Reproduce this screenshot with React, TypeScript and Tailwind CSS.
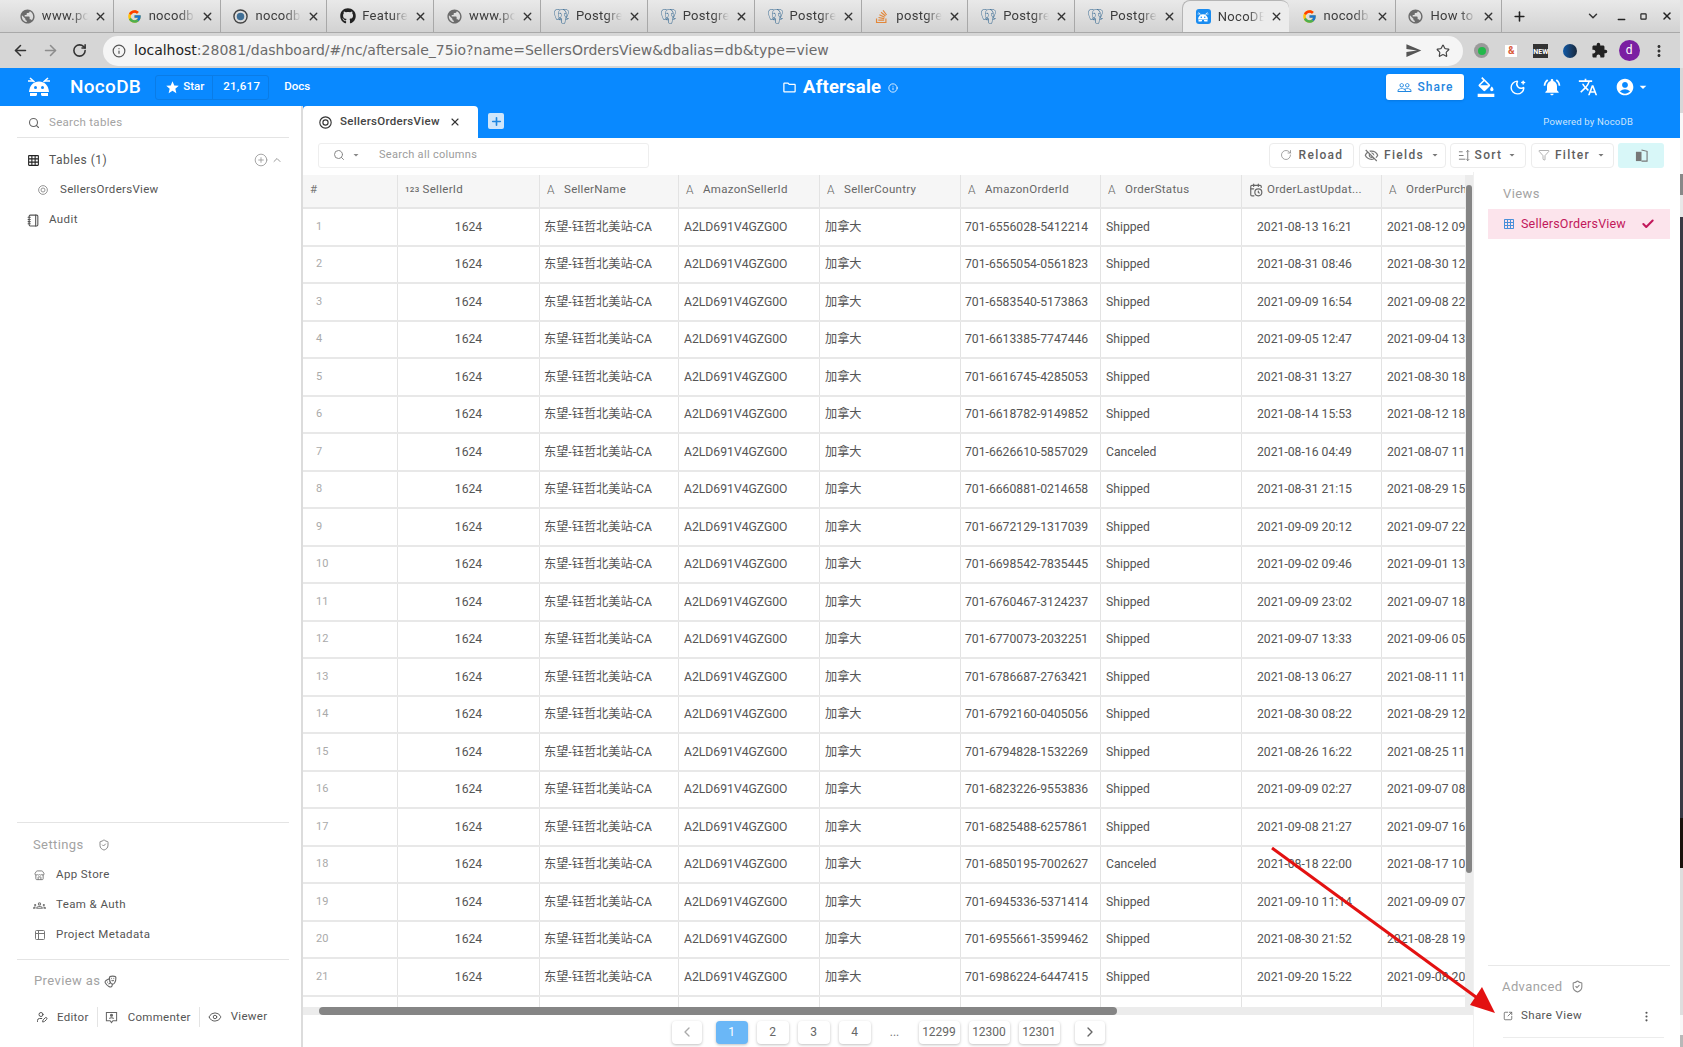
import React from 'react';
import {
  ArrowLeft, ArrowRight, RotateCw, Info, Star, Search, ChevronUp, ChevronLeft, ChevronRight, CirclePlus,
  Notebook, ShieldCheck, Drama, UserPen, Eye, SquareArrowOutUpRight, EllipsisVertical, Plus, X, Minus, ChevronDown,
  CalendarClock, Check, MoonStar, Store, Table2, Filter, Square,
} from 'lucide-react';
import { FcGoogle } from 'react-icons/fc';
import { FaGithub, FaStackOverflow } from 'react-icons/fa';
import { SiPostgresql } from 'react-icons/si';
import {
  MdPublic, MdSend, MdExtension, MdStar, MdOutlineFolder, MdFormatColorFill, MdNotificationsActive, MdTranslate,
  MdAccountCircle, MdArrowDropDown, MdOutlineGroups, MdOutlineGridOn, MdOutlineVisibilityOff, MdMoreVert, MdPeopleOutline,
} from 'react-icons/md';

const NocoLogo = ({ className }: { className?: string }) => (
  <svg viewBox="0 0 24 20" className={className} fill="currentColor">
    <path d="M3 1 L7.5 5 M21 1 L16.5 5" stroke="currentColor" strokeWidth="1.6" fill="none" />
    <path d="M1 4 L6 4 M23 4 L18 4" stroke="currentColor" strokeWidth="1.4" fill="none" />
    <path d="M12 4.5c5.500 0 9.500 4 10 10.500H2c.5-6.500 4.500-10.500 10-10.500z" />
    <circle cx="8.500" cy="10.500" r="1.500" fill="#0989ff" />
    <circle cx="15.500" cy="10.500" r="1.500" fill="#0989ff" />
    <path d="M3 16h7v1.500c0 1-1 1.500-2 1.500H3zM21 16h-7v1.500c0 1 1 1.500 2 1.500h5z" />
  </svg>
);

const TargetIcon = ({ className }: { className?: string }) => (
  <svg viewBox="0 0 16 16" className={className} fill="none" stroke="currentColor">
    <circle cx="8" cy="8" r="7" strokeWidth="1.400" />
    <circle cx="8" cy="8" r="3.200" strokeWidth="1.400" />
  </svg>
);

const RingIcon = () => (
  <svg viewBox="0 0 16 16" className="w-[15px] h-[15px]">
    <circle cx="8" cy="8" r="7" fill="none" stroke="#444" strokeWidth="1.500" />
    <circle cx="8" cy="8" r="4" fill="#3f6f96" />
  </svg>
);

const PgIcon = () => <SiPostgresql className="w-[15px] h-[15px] text-[#336791]" />;
const GlobeIcon = () => <MdPublic className="w-[17px] h-[17px] text-[#6b6b6b]" />;

const chromeTabs: { icon: React.ReactNode; label: string; active?: boolean }[] = [
  { icon: <GlobeIcon />, label: 'www.postgresql' },
  { icon: <FcGoogle className="w-[15px] h-[15px]" />, label: 'nocodb' },
  { icon: <RingIcon />, label: 'nocodb/nocodb' },
  { icon: <FaGithub className="w-[16px] h-[16px] text-[#222]" />, label: 'Feature' },
  { icon: <GlobeIcon />, label: 'www.postgresql' },
  { icon: <PgIcon />, label: 'Postgres' },
  { icon: <PgIcon />, label: 'Postgres' },
  { icon: <PgIcon />, label: 'Postgres' },
  { icon: <FaStackOverflow className="w-[15px] h-[15px] text-[#e2873a]" />, label: 'postgres' },
  { icon: <PgIcon />, label: 'Postgres' },
  { icon: <PgIcon />, label: 'Postgres' },
  {
    icon: (
      <span className="w-[15px] h-[15px] rounded-[3px] bg-[#1a8cf0] flex items-center justify-center text-white">
        <NocoLogo className="w-[12px] h-[10px]" />
      </span>
    ),
    label: 'NocoDB',
    active: true,
  },
  { icon: <FcGoogle className="w-[15px] h-[15px]" />, label: 'nocodb' },
  { icon: <GlobeIcon />, label: 'How to' },
];

const rows: [string, string, string, string][] = [
  ['701-6556028-5412214', 'Shipped', '2021-08-13 16:21', '2021-08-12 09:30'],
  ['701-6565054-0561823', 'Shipped', '2021-08-31 08:46', '2021-08-30 12:10'],
  ['701-6583540-5173863', 'Shipped', '2021-09-09 16:54', '2021-09-08 22:14'],
  ['701-6613385-7747446', 'Shipped', '2021-09-05 12:47', '2021-09-04 13:02'],
  ['701-6616745-4285053', 'Shipped', '2021-08-31 13:27', '2021-08-30 18:40'],
  ['701-6618782-9149852', 'Shipped', '2021-08-14 15:53', '2021-08-12 18:21'],
  ['701-6626610-5857029', 'Canceled', '2021-08-16 04:49', '2021-08-07 11:05'],
  ['701-6660881-0214658', 'Shipped', '2021-08-31 21:15', '2021-08-29 15:33'],
  ['701-6672129-1317039', 'Shipped', '2021-09-09 20:12', '2021-09-07 22:48'],
  ['701-6698542-7835445', 'Shipped', '2021-09-02 09:46', '2021-09-01 13:16'],
  ['701-6760467-3124237', 'Shipped', '2021-09-09 23:02', '2021-09-07 18:27'],
  ['701-6770073-2032251', 'Shipped', '2021-09-07 13:33', '2021-09-06 05:51'],
  ['701-6786687-2763421', 'Shipped', '2021-08-13 06:27', '2021-08-11 11:09'],
  ['701-6792160-0405056', 'Shipped', '2021-08-30 08:22', '2021-08-29 12:44'],
  ['701-6794828-1532269', 'Shipped', '2021-08-26 16:22', '2021-08-25 11:37'],
  ['701-6823226-9553836', 'Shipped', '2021-09-09 02:27', '2021-09-07 08:18'],
  ['701-6825488-6257861', 'Shipped', '2021-09-08 21:27', '2021-09-07 16:03'],
  ['701-6850195-7002627', 'Canceled', '2021-08-18 22:00', '2021-08-17 10:25'],
  ['701-6945336-5371414', 'Shipped', '2021-09-10 11:14', '2021-09-09 07:12'],
  ['701-6955661-3599462', 'Shipped', '2021-08-30 21:52', '2021-08-28 19:41'],
  ['701-6986224-6447415', 'Shipped', '2021-09-20 15:22', '2021-09-08 20:56'],
];

const gridCols = 'grid grid-cols-[95px_142px_139px_141px_141px_140px_141px_140px_140px]';
const cellLine = 'border-r border-[#e3e3e3] overflow-hidden whitespace-nowrap flex items-center';

const ColHead = ({ label, type = 'A' }: { label: string; type?: 'A' | 'num' | 'date' }) => (
  <div className={`${cellLine} pl-[7px] gap-[8px] pb-[3px]`}>
    {type === 'A' && <span className="text-[12px] font-light text-[#666] w-[9px]">A</span>}
    {type === 'date' && <CalendarClock className="w-[14px] h-[14px] text-[#666] -mr-[4px]" />}
    {type === 'num' && <span className="text-[8px] font-medium text-[#666] -mr-[5px]">123</span>}
    <span>{label}</span>
  </div>
);

const ToolBtn = ({ children, className = '' }: { children: React.ReactNode; className?: string }) => (
  <div className={`h-[25px] flex items-center justify-center rounded-[4px] border border-[#ececec] text-[12px] font-medium tracking-[1.300px] text-[#5f5f5f] ${className}`}>
    {children}
  </div>
);

const PageBtn = ({ children, active, className = '' }: { children: React.ReactNode; active?: boolean; className?: string }) => (
  <div className={`h-[23px] flex items-center justify-center rounded-[4px] text-[12px] shadow-[0_1px_3px_rgba(0,0,0,0.25)] ${active ? 'bg-[#6ab7f7] text-white' : 'bg-white text-[#666]'} ${className}`}>
    {children}
  </div>
);

const SideItem = ({ icon, label }: { icon: React.ReactNode; label: string }) => (
  <div className="h-[30px] flex items-center pl-[33px] gap-[10px] text-[11.500px] tracking-[0.400px] text-[#555]">
    <span className="w-[13px] flex justify-center text-[#777]">{icon}</span>
    {label}
  </div>
);

export default function App() {
  return (
    <div className="relative w-[1683px] h-[1047px] overflow-hidden flex bg-white font-['Roboto','Noto_Sans_CJK_SC',sans-serif]">
      <div className="w-[1680px] flex flex-col shrink-0">
        {/* browser tabs */}
        <div className="h-[33px] flex items-center pl-[7px] bg-gradient-to-b from-[#e9e9e9] to-[#d2d2d2] border-b border-[#a9a9a9] shrink-0">
          {chromeTabs.map((t, i) => (
            <div
              key={i}
              className={`h-[32px] w-[107px] -ml-[0.200px] flex items-center pl-[12px] pr-[6px] gap-[6px] text-[13px] tracking-[0.300px] text-[#3c3c3c] ${t.active ? 'bg-[#ececec] rounded-t-[8px] border border-b-0 border-[#b5b5b5] w-[105px]' : 'border-r border-[#a8a8a8]'} ${i === 10 || i === 11 ? 'border-r-0' : ''}`}
            >
              <span className="w-[17px] flex justify-center shrink-0">{t.icon}</span>
              <span className="flex-1 overflow-hidden whitespace-nowrap [mask-image:linear-gradient(to_right,black_65%,transparent)]">{t.label}</span>
              <X className="w-[13px] h-[13px] text-[#333] shrink-0" strokeWidth={2.500} />
            </div>
          ))}
          <Plus className="w-[15px] h-[15px] ml-[10px] text-[#222]" strokeWidth={2.500} />
          <ChevronDown className="w-[14px] h-[14px] ml-[59px] text-[#333]" strokeWidth={2.500} />
          <Minus className="w-[11px] h-[11px] ml-[16px] mt-[6px] text-[#222]" strokeWidth={3} />
          <Square className="w-[7px] h-[7px] ml-[13px] text-[#222]" strokeWidth={4} />
          <X className="w-[12px] h-[12px] ml-[14px] text-[#222]" strokeWidth={3} />
        </div>

        {/* browser address bar */}
        <div className="h-[35px] flex items-center bg-[#d6d6d6] shrink-0">
          <ArrowLeft className="ml-[12px] w-[17px] h-[17px] text-[#333]" strokeWidth={2.200} />
          <ArrowRight className="ml-[13px] w-[17px] h-[17px] text-[#8d8d8d]" strokeWidth={2.200} />
          <RotateCw className="ml-[13px] w-[15px] h-[15px] text-[#333]" strokeWidth={2.500} />
          <div className="ml-[16px] w-[1360px] h-[30px] rounded-full bg-[#f5f5f5] flex items-center pl-[9px] pr-[13px] font-['DejaVu_Sans',sans-serif] text-[14px] text-[#6b6b6b]">
            <Info className="w-[14px] h-[14px] text-[#555] mr-[8px]" />
            <span className="text-[#222]">localhost</span>:28081/dashboard/#/nc/aftersale_75io?name=SellersOrdersView&dbalias=db&type=view
            <MdSend className="ml-auto w-[17px] h-[17px] text-[#555]" />
            <Star className="ml-[14px] w-[14px] h-[14px] text-[#444]" strokeWidth={2} />
          </div>
          <div className="ml-[4px] flex items-center">
            <span className="w-[29.500px] flex justify-center"><span className="w-[15px] h-[15px] rounded-full bg-[#9a9a9a] flex items-center justify-center"><span className="w-[8px] h-[8px] rounded-full bg-[#22b84a]" /></span></span>
            <span className="w-[29.500px] flex justify-center"><span className="w-[12px] h-[12px] bg-white text-[#d95a3c] text-[10px] leading-[12px] text-center font-bold">&</span></span>
            <span className="w-[29.500px] flex justify-center"><span className="w-[15px] h-[14px] bg-[#333] text-white text-[7px] leading-[16px] text-center font-bold">NEW</span></span>
            <span className="w-[29.500px] flex justify-center"><span className="w-[14px] h-[14px] rounded-full bg-gradient-to-r from-[#0d5aa8] to-[#16283c]" /></span>
            <span className="w-[29.500px] flex justify-center"><MdExtension className="w-[17px] h-[17px] text-[#222]" /></span>
            <span className="w-[29.500px] flex justify-center"><span className="w-[21px] h-[21px] rounded-full bg-[#7b1fa2] text-white text-[12px] leading-[21px] text-center">d</span></span>
            <span className="w-[29.500px] flex justify-center"><MdMoreVert className="w-[18px] h-[18px] text-[#333]" /></span>
          </div>
        </div>

        {/* app header */}
        <div className="relative h-[38px] bg-[#0989ff] flex items-center text-white shrink-0">
          <NocoLogo className="ml-[27px] w-[24px] h-[20px]" />
          <span className="ml-[19px] text-[19px] font-medium tracking-[0.300px]">NocoDB</span>
          <div className="ml-[14px] w-[114px] h-[25px] flex items-center border border-[#0a7ce6] rounded-[3px] text-[11.500px] font-medium">
            <MdStar className="ml-[9px] w-[15px] h-[15px]" />
            <span className="ml-[3px] w-[29px]">Star</span>
            <span className="h-full border-l border-[#0a7ce6] pl-[10px] flex items-center tracking-[0.300px]">21,617</span>
          </div>
          <span className="ml-[15px] text-[11.500px] font-medium">Docs</span>
          <div className="absolute left-[782px] top-0 h-full pt-[1px] flex items-center">
            <MdOutlineFolder className="w-[15px] h-[15px]" />
            <span className="ml-[6px] text-[18.500px] font-bold tracking-[0.200px]">Aftersale</span>
            <Info className="ml-[7px] w-[10px] h-[10px]" />
          </div>
          <div className="ml-auto flex items-center text-white">
            <div className="w-[78px] h-[26px] rounded-[3px] bg-white shadow-sm flex items-center justify-center gap-[6px] text-[12px] font-medium tracking-[1px] text-[#1f86e0]">
              <MdPeopleOutline className="w-[15px] h-[15px]" />
              Share
            </div>
            <MdFormatColorFill className="ml-[12px] w-[20px] h-[20px]" />
            <MoonStar className="ml-[13px] w-[17px] h-[17px]" strokeWidth={2} />
            <MdNotificationsActive className="ml-[16px] w-[20px] h-[20px]" />
            <MdTranslate className="ml-[16px] w-[20px] h-[20px]" />
            <MdAccountCircle className="ml-[17px] w-[20px] h-[20px]" />
            <MdArrowDropDown className="mr-[29px] w-[16px] h-[16px]" />
          </div>
        </div>

        <div className="flex-1 flex min-h-0">
          {/* sidebar */}
          <aside className="w-[303px] shrink-0 border-r-2 border-[#dcdcdc] flex flex-col pb-[15px]">
            <div className="ml-[17px] mr-[12px] h-[32px] pt-[3px] border-b border-[#e4e4e4] flex items-center pl-[11px] gap-[9px] text-[11.500px] tracking-[0.300px] text-[#a3a3a3]">
              <Search className="w-[12px] h-[12px] text-[#666]" strokeWidth={2.200} />
              Search tables
            </div>
            <div className="mt-[7px] h-[30px] flex items-center pl-[27px] pr-[18px] text-[12px] tracking-[0.500px] text-[#555]">
              <MdOutlineGridOn className="w-[13px] h-[13px] text-[#222] mr-[9px]" />
              Tables (1)
              <CirclePlus className="ml-auto w-[14px] h-[14px] text-[#999]" strokeWidth={1.500} />
              <ChevronUp className="ml-[3px] w-[12px] h-[12px] text-[#999]" />
            </div>
            <div className="h-[30px] flex items-center pl-[38px] gap-[12px] text-[11.500px] tracking-[0.300px] text-[#555]">
              <TargetIcon className="w-[10px] h-[10px] text-[#888]" />
              SellersOrdersView
            </div>
            <div className="h-[30px] flex items-center pl-[27px] gap-[9px] text-[11.500px] tracking-[0.400px] text-[#555]">
              <Notebook className="w-[13px] h-[13px] text-[#555]" />
              Audit
            </div>
            <div className="flex-1" />
            <div className="ml-[17px] mr-[12px] border-t border-[#e4e4e4]" />
            <div className="h-[37px] pt-[6px] flex items-center pl-[33px] gap-[14px] text-[13px] tracking-[0.400px] text-[#a3a3a3]">
              Settings
              <ShieldCheck className="w-[12px] h-[12px] text-[#888]" />
            </div>
            <SideItem icon={<Store className="w-[11px] h-[11px]" />} label="App Store" />
            <SideItem icon={<MdOutlineGroups className="w-[13px] h-[13px]" />} label="Team & Auth" />
            <SideItem icon={<Table2 className="w-[12px] h-[12px]" />} label="Project Metadata" />
            <div className="mt-[9px] ml-[17px] mr-[12px] border-t border-[#e4e4e4]" />
            <div className="h-[42px] flex items-center pl-[34px] gap-[4px] text-[13px] tracking-[0.400px] text-[#a3a3a3]">
              Preview as
              <Drama className="w-[13px] h-[13px] text-[#666]" />
            </div>
            <div className="h-[30px] flex items-center pl-[36px] text-[11.500px] tracking-[0.300px] text-[#555]">
              <UserPen className="w-[12px] h-[12px] text-[#555]" />
              <span className="ml-[9px] pr-[8px] border-r border-[#e4e4e4] h-[20px] leading-[20px]">Editor</span>
              <svg viewBox="0 0 14 14" className="ml-[7px] w-[13px] h-[13px] text-[#666]" fill="none" stroke="currentColor" strokeWidth="1.100">
                <path d="M1.500 1.500h11v9h-4L7 12.500l-1.500-2h-4z" />
                <circle cx="7" cy="4.500" r="1.100" fill="currentColor" />
                <path d="M4.800 8.300c.5-1.300 3.900-1.300 4.400 0" />
              </svg>
              <span className="ml-[10px] pr-[8px] border-r border-[#e4e4e4] h-[20px] leading-[20px]">Commenter</span>
              <Eye className="ml-[8px] w-[14px] h-[14px] text-[#555]" strokeWidth={1.600} />
              <span className="ml-[9px]">Viewer</span>
            </div>
          </aside>

          <div className="flex-1 min-w-0 flex flex-col">
            {/* open tabs strip */}
            <div className="h-[32px] bg-[#0989ff] flex items-end shrink-0">
              <div className="w-[175px] h-[32px] rounded-t-[4px] bg-white flex items-center pl-[16px] text-[11.500px] font-medium tracking-[0.300px] text-[#444]">
                <TargetIcon className="w-[13px] h-[13px] text-[#333] mr-[8px]" />
                SellersOrdersView
                <X className="ml-[9px] w-[12px] h-[12px] text-[#333]" strokeWidth={2.200} />
              </div>
              <div className="ml-[10px] mb-[9px] w-[16px] h-[16px] rounded-[2px] bg-[#cfe6fb] flex items-center justify-center">
                <Plus className="w-[13px] h-[13px] text-[#1f86e0]" strokeWidth={3} />
              </div>
              <span className="ml-auto mr-[47px] mb-[9px] text-[9.500px] tracking-[0.200px] text-[#cfe6fb]">Powered by NocoDB</span>
            </div>

            {/* toolbar */}
            <div className="h-[34px] flex items-center pl-[15px] shrink-0">
              <div className="w-[331px] h-[25px] border border-[#eeeeee] rounded-[3px] flex items-center pl-[14px] text-[11px] tracking-[0.300px] text-[#9c9c9c]">
                <Search className="w-[12px] h-[12px] text-[#888]" />
                <MdArrowDropDown className="ml-[5px] w-[12px] h-[12px] text-[#888]" />
                <span className="ml-[17px]">Search all columns</span>
              </div>
              <ToolBtn className="ml-auto w-[85px] gap-[7px]">
                <RotateCw className="w-[12px] h-[12px] text-[#888]" strokeWidth={1.500} />
                Reload
              </ToolBtn>
              <ToolBtn className="ml-[5px] w-[87px] gap-[5px]">
                <MdOutlineVisibilityOff className="w-[15px] h-[15px] text-[#777]" />
                Fields
                <MdArrowDropDown className="w-[12px] h-[12px] text-[#777]" />
              </ToolBtn>
              <ToolBtn className="ml-[4px] w-[76px] gap-[4px]">
                <svg viewBox="0 0 14 14" className="w-[13px] h-[13px] text-[#777]" fill="none" stroke="currentColor" strokeWidth="1">
                  <path d="M1 3h4M1 7h5M1 11h7M10.500 1.500v11M9 3l1.500-1.500L12 3M9 11l1.500 1.500L12 11" />
                </svg>
                Sort
                <MdArrowDropDown className="w-[12px] h-[12px] text-[#777]" />
              </ToolBtn>
              <ToolBtn className="ml-[5px] w-[83px] gap-[5px]">
                <Filter className="w-[12px] h-[12px] text-[#888]" strokeWidth={1.300} />
                Filter
                <MdArrowDropDown className="w-[12px] h-[12px] text-[#777]" />
              </ToolBtn>
              <div className="ml-[4px] mr-[16px] w-[46px] h-[25px] rounded-[3px] bg-[#d8f7f8] flex items-center justify-center">
                <svg viewBox="0 0 14 14" className="w-[13px] h-[13px] text-[#777]">
                  <path d="M1 3h6v10H1z" fill="currentColor" />
                  <path d="M7 1l6 1.500v10.500h-6" fill="none" stroke="currentColor" strokeWidth="1.200" />
                </svg>
              </div>
            </div>

            <div className="flex-1 min-h-0 flex">
              {/* data grid */}
              <div className="w-[1170px] shrink-0 flex flex-col pt-[3px]">
                <div className="flex h-[840px]">
                  <div className="w-[1162px] flex flex-col">
                    <div className="flex-1 overflow-hidden text-[12px] text-[#555]">
                      <div className="w-[1319px]">
                        <div className={`${gridCols} h-[34px] bg-[#f6f6f6] border-b-2 border-[#e6e6e6] text-[11.500px] tracking-[0.300px] text-[#666]`}>
                          <div className={`${cellLine} pl-[7px] pb-[3px] text-[#777]`}>#</div>
                          <ColHead label="SellerId" type="num" />
                          <ColHead label="SellerName" />
                          <ColHead label="AmazonSellerId" />
                          <ColHead label="SellerCountry" />
                          <ColHead label="AmazonOrderId" />
                          <ColHead label="OrderStatus" />
                          <ColHead label="OrderLastUpdat..." type="date" />
                          <ColHead label="OrderPurchaseDate" />
                        </div>
                        {rows.map((r, i) => (
                          <div key={r[0]} className={`${gridCols} h-[37.500px] border-b-2 border-[#e8e8e8] text-[12.200px]`}>
                            <div className={`${cellLine} pl-[13px] text-[11px] text-[#aaa]`}>{i + 1}</div>
                            <div className={`${cellLine} justify-center`}>1624</div>
                            <div className={`${cellLine} pl-[4px]`}>东望-钰哲北美站-CA</div>
                            <div className={`${cellLine} pl-[5px]`}>A2LD691V4GZG0O</div>
                            <div className={`${cellLine} pl-[5px]`}>加拿大</div>
                            <div className={`${cellLine} pl-[4px]`}>{r[0]}</div>
                            <div className={`${cellLine} pl-[5px]`}>{r[1]}</div>
                            <div className={`${cellLine} pl-[15px]`}>{r[2]}</div>
                            <div className={`${cellLine} pl-[5px]`}>{r[3]}</div>
                          </div>
                        ))}
                        <div className={`${gridCols} h-[40px]`}>
                          {Array.from({ length: 9 }).map((_, i) => (
                            <div key={i} className="border-r border-[#e3e3e3]" />
                          ))}
                        </div>
                      </div>
                    </div>
                    <div className="h-[8px] bg-[#ececec] shrink-0 pl-[16px]">
                      <div className="w-[798px] h-[8px] rounded-full bg-[#858585]" />
                    </div>
                  </div>
                  <div className="w-[8px] h-full bg-[#ececec] pt-[10px] pl-[1px]">
                    <div className="w-[6px] h-[688px] rounded-full bg-[#858585]" />
                  </div>
                </div>
                <div className="flex-1 flex items-center justify-center pt-[2px]">
                  <PageBtn className="w-[30px]"><ChevronLeft className="w-[16px] h-[16px] text-[#aaa]" /></PageBtn>
                  <PageBtn active className="ml-[14px] w-[32px]">1</PageBtn>
                  <PageBtn className="ml-[9px] w-[32px]">2</PageBtn>
                  <PageBtn className="ml-[9px] w-[32px]">3</PageBtn>
                  <PageBtn className="ml-[9px] w-[32px]">4</PageBtn>
                  <span className="w-[48px] text-center text-[12px] text-[#777]">...</span>
                  <PageBtn className="w-[41px]">12299</PageBtn>
                  <PageBtn className="ml-[9px] w-[41px]">12300</PageBtn>
                  <PageBtn className="ml-[9px] w-[41px]">12301</PageBtn>
                  <PageBtn className="ml-[15px] w-[30px]"><ChevronRight className="w-[16px] h-[16px] text-[#666]" /></PageBtn>
                </div>
              </div>

              {/* views panel */}
              <div className="flex-1 flex flex-col border-l border-[#f0f0f0] pr-[10px] pl-[14px]">
                <div className="mt-[14px] ml-[15px] h-[16px] text-[13px] leading-[16px] tracking-[0.400px] text-[#a3a3a3]">Views</div>
                <div className="mt-[7px] h-[30px] bg-[#fce4ec] flex items-center pl-[15px] pr-[15px] text-[12.500px] tracking-[0.200px] text-[#c2185b]">
                  <MdOutlineGridOn className="w-[12px] h-[12px] text-[#4a90d9] mr-[6px]" />
                  SellersOrdersView
                  <Check className="ml-auto w-[14px] h-[14px]" strokeWidth={3.500} />
                </div>
                <div className="flex-1" />
                <div className="border-t border-[#e8e8e8] h-[36px] pt-[6px] flex items-center pl-[14px] gap-[8px] text-[13px] tracking-[0.400px] text-[#a3a3a3]">
                  Advanced
                  <ShieldCheck className="w-[13px] h-[13px] text-[#888]" />
                </div>
                <div className="h-[30px] ml-[15px] flex items-center pr-[17px] gap-[8px] text-[11.500px] tracking-[0.400px] text-[#555]">
                  <SquareArrowOutUpRight className="w-[10px] h-[10px] text-[#666]" />
                  Share View
                  <EllipsisVertical className="ml-auto w-[13px] h-[13px] text-[#555]" />
                </div>
                <div className="ml-[15px] mr-[6px] mt-[6px] mb-[9px] border-t border-[#ececec]" />
              </div>
            </div>
          </div>
        </div>
      </div>

      {/* other window showing at the screen edge */}
      <div className="flex-1 flex flex-col">
        <div className="h-[68px] bg-[#e5e5e5]" />
        <div className="h-[45px] bg-[#d8d8d8]" />
        <div className="h-[61px] bg-[#f8f8f8]" />
        <div className="h-[21px] bg-[#888888]" />
        <div className="h-[22px] bg-[#e8e8e8]" />
        <div className="h-[601px] bg-[#3a3a44]" />
        <div className="h-[50px] bg-[#1a120c]" />
        <div className="h-[147px] bg-[#dedede]" />
        <div className="h-[20px] bg-[#f8f8f8]" />
        <div className="flex-1 bg-[#b8b8b8]" />
      </div>

      {/* annotation arrow */}
      <svg className="absolute left-0 top-0 pointer-events-none" width="1683" height="1047">
        <line x1="1272" y1="848" x2="1480" y2="1000" stroke="#e31111" strokeWidth="3" />
        <polygon points="1495,1013 1470,1005 1482,987" fill="#e31111" />
      </svg>
    </div>
  );
}
